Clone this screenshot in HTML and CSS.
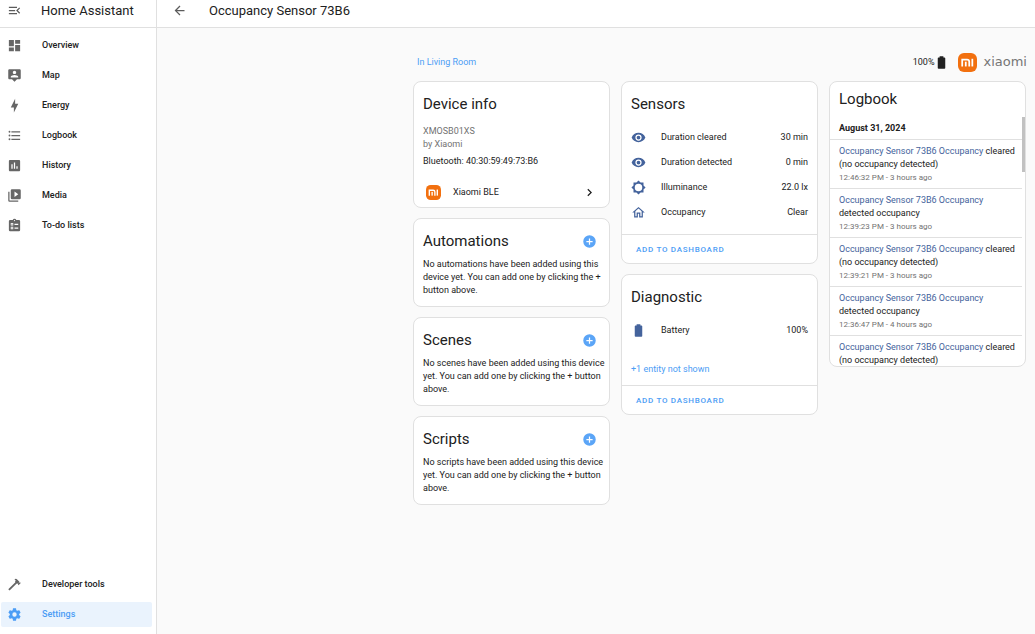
FILE: index.html
```
<!DOCTYPE html>
<html lang="en">
<head>
	<meta charset="utf-8">
	<title>Occupancy Sensor 73B6 - Home Assistant</title>
	<link rel="stylesheet" href="styles.css">
</head>
<body>
	<!-- icons used more than once -->
	<svg class="sprite" aria-hidden="true">
		<symbol id="eye" viewBox="0 0 24 24"><path d="M12,9A3,3 0 0,0 9,12A3,3 0 0,0 12,15A3,3 0 0,0 15,12A3,3 0 0,0 12,9M12,17A5,5 0 0,1 7,12A5,5 0 0,1 12,7A5,5 0 0,1 17,12A5,5 0 0,1 12,17M12,4.5C7,4.5 2.73,7.61 1,12C2.73,16.39 7,19.5 12,19.5C17,19.5 21.27,16.39 23,12C21.27,7.61 17,4.5 12,4.5Z"/></symbol>
		<symbol id="battery" viewBox="0 0 24 24"><path d="M16.67,4H15V2H9V4H7.33A1.33,1.33 0 0,0 6,5.33V20.67C6,21.4 6.6,22 7.33,22H16.67A1.33,1.33 0 0,0 18,20.67V5.33C18,4.6 17.4,4 16.67,4Z"/></symbol>
		<symbol id="plus" viewBox="0 0 24 24"><path d="M17,13H13V17H11V13H7V11H11V7H13V11H17M12,2A10,10 0 0,0 2,12A10,10 0 0,0 12,22A10,10 0 0,0 22,12A10,10 0 0,0 12,2Z"/></symbol>
		<symbol id="mi" viewBox="0 0 24 24">
			<rect width="24" height="24" rx="7.5" fill="#f2700f"/>
			<path d="M5.3 17V8.4H11.4Q14.2 8.4 14.2 11.2V17" fill="none" stroke="#fff" stroke-width="2.2"/>
			<rect x="8.7" y="11" width="2.2" height="6" fill="#fff"/>
			<rect x="17" y="7.3" width="2.2" height="9.7" fill="#fff"/>
		</symbol>
	</svg>

	<aside class="sidebar">
		<header class="bar menu">
			<button class="icon-button" aria-label="Sidebar toggle"><svg class="icon" viewBox="0 0 24 24"><path d="M21,15.61L19.59,17L14.58,12L19.59,7L21,8.39L17.44,12L21,15.61M3,6H16V8H3V6M3,13V11H13V13H3M3,18V16H16V18H3Z"/></svg></button>
			<span class="title">Home Assistant</span>
		</header>
		<nav>
			<a href="#overview"><svg class="icon" viewBox="0 0 24 24"><path d="M13,3V9H21V3M13,21H21V11H13M3,21H11V15H3M3,13H11V3H3V13Z"/></svg>Overview</a>
			<a href="#map"><svg class="icon" viewBox="0 0 24 24"><path fill-rule="evenodd" d="M20 2H4C2.89 2 2 2.89 2 4V16C2 17.11 2.9 18 4 18H8L12 22L16 18H20C21.11 18 22 17.11 22 16V4C22 2.89 21.1 2 20 2M12 4.3C13.5 4.3 14.7 5.5 14.7 7S13.5 9.7 12 9.7 9.3 8.5 9.3 7 10.5 4.3 12 4.3M18 15H6V14.1C6 12.1 10 11 12 11S18 12.1 18 14.1V15Z"/></svg>Map</a>
			<a href="#energy"><svg class="icon" viewBox="0 0 24 24"><path d="M11 15H6L13 1V9H18L11 23V15Z"/></svg>Energy</a>
			<a href="#logbook"><svg class="icon" viewBox="0 0 24 24"><path d="M7,5H21V7H7V5M7,13V11H21V13H7M7,19V17H21V19H7"/><circle cx="4" cy="6" r="1.5"/><circle cx="4" cy="12" r="1.5"/><circle cx="4" cy="18" r="1.5"/></svg>Logbook</a>
			<a href="#history"><svg class="icon" viewBox="0 0 24 24"><path fill-rule="evenodd" d="M9 17H7V10H9V17M13 17H11V7H13V17M17 17H15V13H17V17M19 3H5C3.9 3 3 3.9 3 5V19C3 20.1 3.9 21 5 21H19C20.1 21 21 20.1 21 19V5C21 3.9 20.1 3 19 3Z"/></svg>History</a>
			<a href="#media"><svg class="icon" viewBox="0 0 24 24"><path fill-rule="evenodd" d="M4,6H2V20A2,2 0 0,0 4,22H18V20H4V6M20,2H8A2,2 0 0,0 6,4V16A2,2 0 0,0 8,18H20A2,2 0 0,0 22,16V4A2,2 0 0,0 20,2M12,14.5V5.5L18,10L12,14.5Z"/></svg>Media</a>
			<a href="#todo"><svg class="icon" viewBox="0 0 24 24"><path fill-rule="evenodd" d="M19 3H14.8A3 3 0 0 0 9.2 3H5A2 2 0 0 0 3 5V19A2 2 0 0 0 5 21H19A2 2 0 0 0 21 19V5A2 2 0 0 0 19 3M12 3A1 1 0 1 1 12 5A1 1 0 1 1 12 3M6 8H10V12H6ZM12 9H18V11H12ZM6 14H10V18H6ZM12 15H18V17H12ZM7.3 9.3V10.7H8.7V9.3ZM7.3 15.3V16.7H8.7V15.3Z"/></svg>To-do lists</a>
			<a href="#tools" class="first-bottom"><svg class="icon" viewBox="0 0 24 24"><path d="M2 19.63L13.43 8.2L12.72 7.5L14.14 6.07L12 3.89C13.2 2.7 15.09 2.7 16.27 3.89L19.87 7.5L18.45 8.91H21.29L22 9.62L18.45 13.21L17.74 12.5V9.62L16.27 11.04L15.56 10.33L4.13 21.76L2 19.63Z"/></svg>Developer tools</a>
			<a href="#settings" class="selected"><svg class="icon" viewBox="0 0 24 24"><path d="M12,15.5A3.5,3.5 0 0,1 8.5,12A3.5,3.5 0 0,1 12,8.5A3.5,3.5 0 0,1 15.5,12A3.5,3.5 0 0,1 12,15.5M19.43,12.97C19.47,12.65 19.5,12.33 19.5,12C19.5,11.67 19.47,11.34 19.43,11L21.54,9.37C21.73,9.22 21.78,8.95 21.66,8.73L19.66,5.27C19.54,5.05 19.27,4.96 19.05,5.05L16.56,6.05C16.04,5.66 15.5,5.32 14.87,5.07L14.5,2.42C14.46,2.18 14.25,2 14,2H10C9.75,2 9.54,2.18 9.5,2.42L9.13,5.07C8.5,5.32 7.96,5.66 7.44,6.05L4.95,5.05C4.73,4.96 4.46,5.05 4.34,5.27L2.34,8.73C2.21,8.95 2.27,9.22 2.46,9.37L4.57,11C4.53,11.34 4.5,11.67 4.5,12C4.5,12.33 4.53,12.65 4.57,12.97L2.46,14.63C2.27,14.78 2.21,15.05 2.34,15.27L4.34,18.73C4.46,18.95 4.73,19.03 4.95,18.95L7.44,17.94C7.96,18.34 8.5,18.68 9.13,18.93L9.5,21.58C9.54,21.82 9.75,22 10,22H14C14.25,22 14.46,21.82 14.5,21.58L14.87,18.93C15.5,18.67 16.04,18.34 16.56,17.94L19.05,18.95C19.27,19.03 19.54,18.95 19.66,18.73L21.66,15.27C21.78,15.05 21.73,14.78 21.54,14.63L19.43,12.97Z"/></svg>Settings</a>
		</nav>
	</aside>

	<div class="page">
		<header class="bar toolbar">
			<button class="icon-button" aria-label="Back"><svg class="icon" viewBox="0 0 24 24"><path d="M20,11V13H8L13.5,18.5L12.08,19.92L4.16,12L12.08,4.08L13.5,5.5L8,11H20Z"/></svg></button>
			<h1 class="title">Occupancy Sensor 73B6</h1>
		</header>

		<main>
			<div class="device-header">
				<a href="#area">In Living Room</a>
				<span class="level">100%<svg class="icon"><use href="#battery"/></svg></span>
				<span class="brand"><svg class="logo"><use href="#mi"/></svg>xiaomi</span>
			</div>

			<div class="columns">
				<div class="column">
					<section class="card device">
						<h2>Device info</h2>
						<p class="model">XMOSB01XS<br>by Xiaomi</p>
						<p class="connection">Bluetooth: 40:30:59:49:73:B6</p>
						<a href="#ble" class="integration">
							<svg class="logo"><use href="#mi"/></svg>
							<span>Xiaomi BLE</span>
							<svg class="icon" viewBox="0 0 24 24"><path d="M8.59,16.58L13.17,12L8.59,7.41L10,6L16,12L10,18L8.59,16.58Z"/></svg>
						</a>
					</section>
					<section class="card related">
						<h2>Automations <button class="icon-button" aria-label="Add automation"><svg class="icon"><use href="#plus"/></svg></button></h2>
						<p>No automations have been added using this device yet. You can add one by clicking the + button above.</p>
					</section>
					<section class="card related">
						<h2>Scenes <button class="icon-button" aria-label="Add scene"><svg class="icon"><use href="#plus"/></svg></button></h2>
						<p>No scenes have been added using this device yet. You can add one by clicking the + button above.</p>
					</section>
					<section class="card related">
						<h2>Scripts <button class="icon-button" aria-label="Add script"><svg class="icon"><use href="#plus"/></svg></button></h2>
						<p>No scripts have been added using this device yet. You can add one by clicking the + button above.</p>
					</section>
				</div>

				<div class="column">
					<section class="card entities">
						<h2>Sensors</h2>
						<ul>
							<li><svg class="icon"><use href="#eye"/></svg><span>Duration cleared</span><span>30 min</span></li>
							<li><svg class="icon"><use href="#eye"/></svg><span>Duration detected</span><span>0 min</span></li>
							<li><svg class="icon" viewBox="0 0 24 24"><path d="M12,18A6,6 0 0,1 6,12A6,6 0 0,1 12,6A6,6 0 0,1 18,12A6,6 0 0,1 12,18M20,15.31L23.31,12L20,8.69V4H15.31L12,0.69L8.69,4H4V8.69L0.69,12L4,15.31V20H8.69L12,23.31L15.31,20H20V15.31Z"/></svg><span>Illuminance</span><span>22.0 lx</span></li>
							<li><svg class="icon" viewBox="0 0 24 24"><path d="M12 5.69L17 10.19V18H15V12H9V18H7V10.19L12 5.69M12 3L2 12H5V20H11V14H13V20H19V12H22"/></svg><span>Occupancy</span><span>Clear</span></li>
						</ul>
						<div class="actions"><button>ADD TO DASHBOARD</button></div>
					</section>
					<section class="card entities">
						<h2>Diagnostic</h2>
						<ul>
							<li><svg class="icon"><use href="#battery"/></svg><span>Battery</span><span>100%</span></li>
						</ul>
						<button class="show-more">+1 entity not shown</button>
						<div class="actions"><button>ADD TO DASHBOARD</button></div>
					</section>
				</div>

				<div class="column">
					<section class="card logbook">
						<h2>Logbook</h2>
						<div class="log">
							<h3>August 31, 2024</h3>
							<div class="entry"><a href="#e1">Occupancy Sensor 73B6 Occupancy</a> cleared (no occupancy detected)<time>12:46:32 PM - 3 hours ago</time></div>
							<div class="entry"><a href="#e2">Occupancy Sensor 73B6 Occupancy</a> detected occupancy<time>12:39:23 PM - 3 hours ago</time></div>
							<div class="entry"><a href="#e3">Occupancy Sensor 73B6 Occupancy</a> cleared (no occupancy detected)<time>12:39:21 PM - 3 hours ago</time></div>
							<div class="entry"><a href="#e4">Occupancy Sensor 73B6 Occupancy</a> detected occupancy<time>12:36:47 PM - 4 hours ago</time></div>
							<div class="entry"><a href="#e5">Occupancy Sensor 73B6 Occupancy</a> cleared (no occupancy detected)</div>
							<div class="thumb"></div>
						</div>
					</section>
				</div>
			</div>
		</main>
	</div>
</body>
</html>
```
FILE: styles.css
```
:root {
	--primary: #4c9df5;
	--text: #212121;
	--secondary: #727272;
	--divider: #e0e0e0;
	--state: #44639c;
}
* {
	box-sizing: border-box;
}
body {
	margin: 0;
	min-height: 100vh;
	display: flex;
	background: #fafafa;
	color: var(--text);
	font: 9px/13px Roboto, sans-serif;
}
h1, h2, h3, p, ul {
	margin: 0;
	padding: 0;
	font-weight: 400;
}
a {
	color: var(--primary);
	text-decoration: none;
}
button {
	padding: 0;
	border: none;
	background: none;
	color: var(--primary);
	font: inherit;
	cursor: pointer;
}
.sprite {
	display: none;
}
.icon {
	display: block;
	flex: none;
	width: 15px;
	height: 15px;
	fill: currentColor;
}
.icon-button {
	color: #5c5c5c;
}

/* top bars */
.bar {
	display: flex;
	align-items: center;
	height: 28px;
	padding-bottom: 6px;
	background: white;
	border-bottom: 1px solid var(--divider);
}
.title {
	font-size: 13px;
	line-height: 20px;
}
.menu {
	padding-left: 7px;
	gap: 19px;
}
.toolbar {
	padding-left: 15px;
	gap: 22px;
}

/* sidebar */
.sidebar {
	display: flex;
	flex-direction: column;
	flex: none;
	width: 157px;
	background: white;
	border-right: 1px solid var(--divider);
}
nav {
	display: flex;
	flex-direction: column;
	flex: 1;
	gap: 5px;
	padding: 5px 4px 7px 1px;
}
nav a {
	display: flex;
	align-items: center;
	gap: 20px;
	height: 25px;
	padding-left: 6px;
	border-radius: 2px;
	color: var(--text);
	font-weight: 500;
}
nav .icon {
	color: #666;
}
nav .first-bottom {
	margin-top: auto;
}
nav .selected, .selected .icon {
	color: var(--primary);
}
nav .selected {
	background: #eaf3fd;
}

/* content */
.page {
	flex: 1;
	min-width: 0;
}
main {
	max-width: 631px;
	margin-left: auto;
	padding: 22px 9px 20px;
}
.device-header {
	display: flex;
	align-items: center;
	height: 24px;
	margin: 0 -1px 7px 4px;
}
.level {
	display: flex;
	align-items: center;
	margin-left: auto;
}
.brand {
	display: flex;
	align-items: center;
	gap: 6px;
	margin-left: 9px;
	color: #757575;
	font: 13px/20px "DejaVu Sans", sans-serif;
}
.logo {
	flex: none;
	width: 15px;
	height: 15px;
}
.brand .logo {
	width: 19px;
	height: 19px;
}
.columns {
	display: grid;
	grid-template-columns: repeat(3, 1fr);
	align-items: start;
	gap: 11px;
}
.column {
	display: grid;
	gap: 10px;
}
.card {
	background: white;
	border: 1px solid var(--divider);
	border-radius: 8px;
	overflow: hidden;
}
.card h2 {
	display: flex;
	align-items: center;
	justify-content: space-between;
	padding: 12px 9px 0;
	font-size: 15px;
	line-height: 20px;
}
.device p, .related p {
	padding: 0 4px 0 9px;
}
.device .model {
	padding-top: 11px;
	color: var(--secondary);
}
.device .connection {
	padding-top: 4px;
}
.integration {
	display: flex;
	align-items: center;
	gap: 12px;
	height: 29px;
	margin-top: 10px;
	padding: 0 12px;
	color: var(--text);
}
.integration .icon {
	margin-left: auto;
}
.related {
	padding-bottom: 9px;
}
.related .icon-button {
	margin-right: 3px;
	color: #5ba5f7;
}
.related p {
	padding-top: 7px;
}
.entities ul {
	padding: 11px 9px 9px;
	list-style: none;
}
.entities li {
	display: flex;
	align-items: center;
	gap: 15px;
	height: 25px;
}
.entities li .icon {
	color: var(--state);
}
.entities li span:last-child {
	margin-left: auto;
}
.show-more {
	display: block;
	margin: 11px 9px 9px;
}
.actions {
	padding: 8px 14px 7px;
	border-top: 1px solid var(--divider);
}
.actions button {
	font-size: 8px;
	font-weight: 500;
	letter-spacing: 0.09em;
}

/* logbook */
.logbook {
	height: 286px;
}
.logbook h2 {
	padding-top: 7px;
}
.log {
	position: relative;
	padding: 13px 3px 0 0;
}
.log h3 {
	padding: 0 9px 4px;
	font-size: 9px;
	font-weight: 700;
}
.entry {
	padding: 5px 4px 4px 9px;
	border-top: 1px solid var(--divider);
}
.entry a {
	color: var(--state);
}
.entry time {
	display: block;
	color: var(--secondary);
	font-size: 8px;
}
.thumb {
	position: absolute;
	top: 8px;
	right: 0;
	width: 3px;
	height: 55px;
	background: #c1c1c1;
}
```
